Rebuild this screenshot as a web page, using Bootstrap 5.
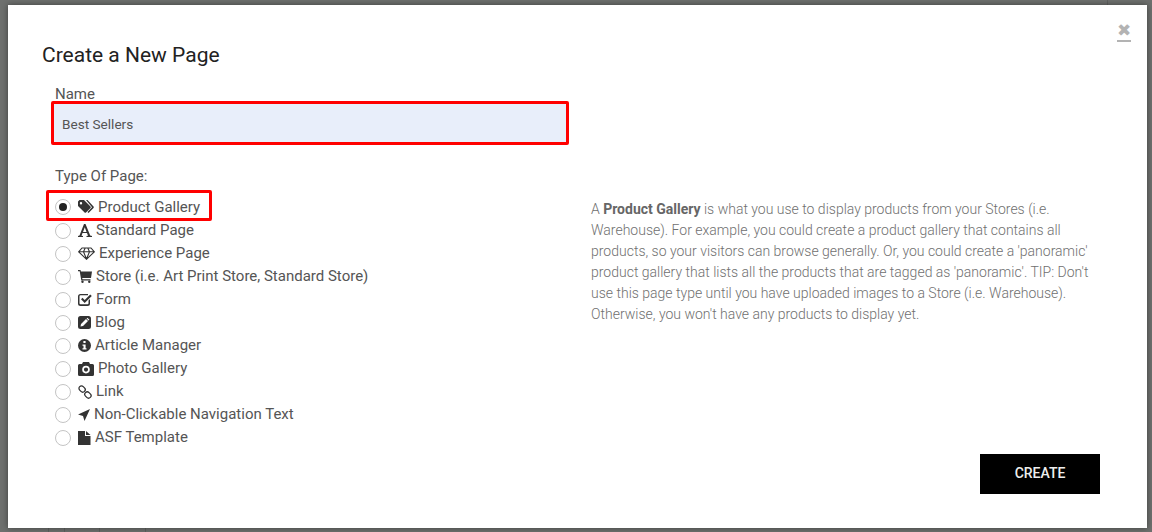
<!DOCTYPE html>
<html lang="en">
<head>
  <meta charset="UTF-8" />
  <title>Create a New Page</title>
  <link href="https://cdn.jsdelivr.net/npm/bootstrap@5.3.3/dist/css/bootstrap.min.css" rel="stylesheet"/>
  <style>
    html, body {
      height: 100%;
      margin: 0;
      overflow: hidden;
    }
    body {
      font-family: Roboto, "Liberation Sans", sans-serif;
      background-color: #6e706e;
      background-image:
        linear-gradient(#5f615f, #5f615f), linear-gradient(#5f615f, #5f615f),
        linear-gradient(#5f615f, #5f615f), linear-gradient(#5f615f, #5f615f),
        linear-gradient(#5f615f, #5f615f);
      background-repeat: no-repeat;
      background-size: 1px 5px, 1px 4px, 1px 4px, 1px 4px, 1px 4px;
      background-position: 1107px top, 48px bottom, 64px bottom, 99px bottom, 145px bottom;
      padding: 5px 5px 4px 8px;
      height: 532px;
    }
    .page-modal {
      background: #fff;
      height: 523px;
      padding: 37px 47px 0 34px;
      box-shadow: 0 0 6px rgba(0, 0, 0, .45);
    }
    .page-title {
      font-size: 21px;
      font-weight: 400;
      line-height: 26px;
      color: #222;
      margin: 0 0 13px;
    }
    .close-x {
      position: absolute;
      top: 17px;
      right: 16px;
      width: 14px;
      height: 20px;
      display: flex;
      justify-content: center;
      font-size: 17px;
      line-height: 17px;
      font-weight: 700;
      color: #b3b3b3;
      border: 0;
      background: none;
      padding: 0;
      border-bottom: 2px solid #b3b3b3;
      font-family: "DejaVu Sans", sans-serif;
    }
    .form-col { width: 527px; padding-left: 13px; }
    .field-label {
      font-size: 15px;
      line-height: 20px;
      color: #555;
      margin: 0;
      display: block;
    }
    .name-label { padding-top: 3px; margin-bottom: -3px; }
    .name-input {
      display: block;
      width: 518px;
      height: 44px;
      margin-left: -4px;
      padding: 1px 8px 0;
      font-size: 13.6px;
      color: #555;
      background: #e8eefa;
      border: 3px solid #f00;
      border-radius: 2px;
      font-family: inherit;
    }
    .type-label { margin-top: 21px; margin-bottom: 10px; }
    .type-row {
      display: flex;
      align-items: center;
      height: 23px;
      font-size: 15px;
      color: #555;
      gap: 7px;
    }
    .type-row.picked {
      width: 166px;
      height: 31px;
      margin: -6px 0 -2px -9px;
      padding: 3px 0 0 6px;
      border: 3px solid #f00;
      border-radius: 2px;
    }
    .radio-dot {
      width: 16px;
      height: 16px;
      border-radius: 50%;
      border: 1px solid #c4c4c4;
      flex: none;
      display: flex;
      align-items: center;
      justify-content: center;
    }
    .picked .radio-dot::after {
      content: "";
      width: 8px;
      height: 8px;
      border-radius: 50%;
      background: #222;
    }
    .type-text { display: flex; align-items: center; gap: 4px; }
    .type-text svg { flex: none; fill: #333; display: block; }
    .help-text {
      width: 510px;
      margin-left: 22px;
      margin-top: 118px;
      font-size: 14px;
      line-height: 21px;
      font-weight: 300;
      color: #707070;
    }
    .help-text strong { font-weight: 700; color: #666; }
    .create-btn {
      position: absolute;
      right: 47px;
      bottom: 34px;
      width: 120px;
      height: 40px;
      background: #000;
      color: #eee;
      border: 0;
      border-radius: 0;
      font-size: 14px;
      font-weight: 500;
      padding: 0 0 2px;
    }
    .create-btn:hover { background: #000; color: #eee; }
  </style>
</head>
<body>

<div class="page-modal position-relative">
  <button class="close-x" type="button" aria-label="Close">&#10006;</button>
  <h1 class="page-title">Create a New Page</h1>
  <div class="d-flex">
    <div class="form-col">
      <label class="field-label name-label" for="pagename">Name</label>
      <input class="name-input" id="pagename" type="text" value="Best Sellers">
      <p class="field-label type-label">Type Of Page:</p>

      <div class="type-row picked">
        <span class="radio-dot"></span>
        <span class="type-text"><svg width="16" height="14" viewBox="0 0 16 14"><path d="M0 1.500 1.500 0H6l6.500 6.500a1 1 0 0 1 0 1.400L8 12.500a1 1 0 0 1-1.400 0L0 6zM3 2a1.200 1.200 0 1 0 0 2.400A1.200 1.200 0 0 0 3 2z"/><path d="M8 0h1.500l6 6.500a1 1 0 0 1 0 1.400L10.500 13 9.500 12l4.500-4.800z"/></svg>Product Gallery</span>
      </div>
      <div class="type-row">
        <span class="radio-dot"></span>
        <span class="type-text"><svg width="14" height="13" viewBox="0 0 14 13"><path d="M0 13v-1l1.500-.4L6 0h1.500l4.700 11.600 1.800.4v1H8.500v-1l1.500-.3-1-2.700H4.500l-1 2.700 1.500.3v1zM5 8h3.500L6.800 3.300z"/></svg>Standard Page</span>
      </div>
      <div class="type-row">
        <span class="radio-dot"></span>
        <span class="type-text"><svg width="17" height="13" viewBox="0 0 17 13"><path fill="none" stroke="#333" stroke-width="1.100" d="M4 1h9l3.300 3.800L8.500 12.300.7 4.800zM.7 4.800h15.600M5.500 4.800 8.500 12l3-7.200L9.800 1M5.500 4.800 7.200 1"/></svg>Experience Page</span>
      </div>
      <div class="type-row">
        <span class="radio-dot"></span>
        <span class="type-text"><svg width="14" height="13" viewBox="0 0 14 13"><path d="M0 0h2.500l.4 1.500H14l-1 6.500H4.200l.3 1.300H12.500v1.200H3.300L1.700 1.300H0z"/><circle cx="4.500" cy="11.800" r="1.200"/><circle cx="11.300" cy="11.800" r="1.200"/></svg>Store (i.e. Art Print Store, Standard Store)</span>
      </div>
      <div class="type-row">
        <span class="radio-dot"></span>
        <span class="type-text"><svg width="14" height="13" viewBox="0 0 14 13"><path fill-rule="evenodd" d="M2.500 1H10v1.300H2.500a1 1 0 0 0-1 1v7a1 1 0 0 0 1 1h7a1 1 0 0 0 1-1V7.500L12 6v4.500A2.500 2.500 0 0 1 9.500 13h-7A2.500 2.500 0 0 1 0 10.500v-7A2.500 2.500 0 0 1 2.500 1z"/><path d="M3 6.300 4.500 4.800l2.200 2.200L12.200 1.500 13.800 3 6.700 10z"/></svg>Form</span>
      </div>
      <div class="type-row">
        <span class="radio-dot"></span>
        <span class="type-text"><svg width="13" height="13" viewBox="0 0 13 13"><path fill-rule="evenodd" d="M2.500 0h8A2.500 2.500 0 0 1 13 2.500v8a2.500 2.500 0 0 1-2.500 2.500h-8A2.500 2.500 0 0 1 0 10.500v-8A2.500 2.500 0 0 1 2.500 0zM3 8l-.5 2.500L5 10l5-5-2-2zM8.600 2.500l2 2 .8-.8-2-2z"/></svg>Blog</span>
      </div>
      <div class="type-row">
        <span class="radio-dot"></span>
        <span class="type-text"><svg width="13" height="13" viewBox="0 0 13 13"><path fill-rule="evenodd" d="M6.500 0a6.500 6.500 0 1 1 0 13 6.500 6.500 0 0 1 0-13zM5.400 2v2h2.200V2zM4.500 5.500v1.200h1v2.600h-1v1.200h4V9.300h-.9V5.500z"/></svg>Article Manager</span>
      </div>
      <div class="type-row">
        <span class="radio-dot"></span>
        <span class="type-text"><svg width="16" height="14" viewBox="0 0 16 14"><path fill-rule="evenodd" d="M5 0h6l1 2h2.500A1.500 1.500 0 0 1 16 3.500v9a1.500 1.500 0 0 1-1.500 1.500h-13A1.500 1.500 0 0 1 0 12.500v-9A1.500 1.500 0 0 1 1.500 2H4zM8 3.800a3.800 3.800 0 1 0 0 7.600 3.800 3.800 0 0 0 0-7.600zM8 5.500a2.100 2.100 0 1 1 0 4.200 2.100 2.100 0 0 1 0-4.200z"/></svg>Photo Gallery</span>
      </div>
      <div class="type-row">
        <span class="radio-dot"></span>
        <span class="type-text"><svg width="14" height="14" viewBox="0 0 14 14"><g fill="none" stroke="#333" stroke-width="1.300"><rect x=".7" y="1.500" width="6.800" height="5" rx="2.500" transform="rotate(45 4.100 4)"/><rect x="6.500" y="7.500" width="6.800" height="5" rx="2.500" transform="rotate(45 9.900 10)"/></g></svg>Link</span>
      </div>
      <div class="type-row">
        <span class="radio-dot"></span>
        <span class="type-text"><svg width="12" height="12" viewBox="0 0 12 12"><path d="M12 0 6.500 12 5 7 0 5.500z"/></svg>Non-Clickable Navigation Text</span>
      </div>
      <div class="type-row">
        <span class="radio-dot"></span>
        <span class="type-text"><svg width="13" height="14" viewBox="0 0 13 14"><path d="M0 0h7v5h5.500v9H0zM8 0l4.500 4H8z"/></svg>ASF Template</span>
      </div>
    </div>
    <p class="help-text">A <strong>Product Gallery</strong> is what you use to display products from your Stores (i.e. Warehouse). For example, you could create a product gallery that contains all products, so your visitors can browse generally. Or, you could create a 'panoramic' product gallery that lists all the products that are tagged as 'panoramic'. TIP: Don't use this page type until you have uploaded images to a Store (i.e. Warehouse). Otherwise, you won't have any products to display yet.</p>
  </div>
  <button class="btn create-btn" type="button">CREATE</button>
</div>

<script src="https://cdn.jsdelivr.net/npm/bootstrap@5.3.3/dist/js/bootstrap.bundle.min.js"></script>
</body>
</html>
